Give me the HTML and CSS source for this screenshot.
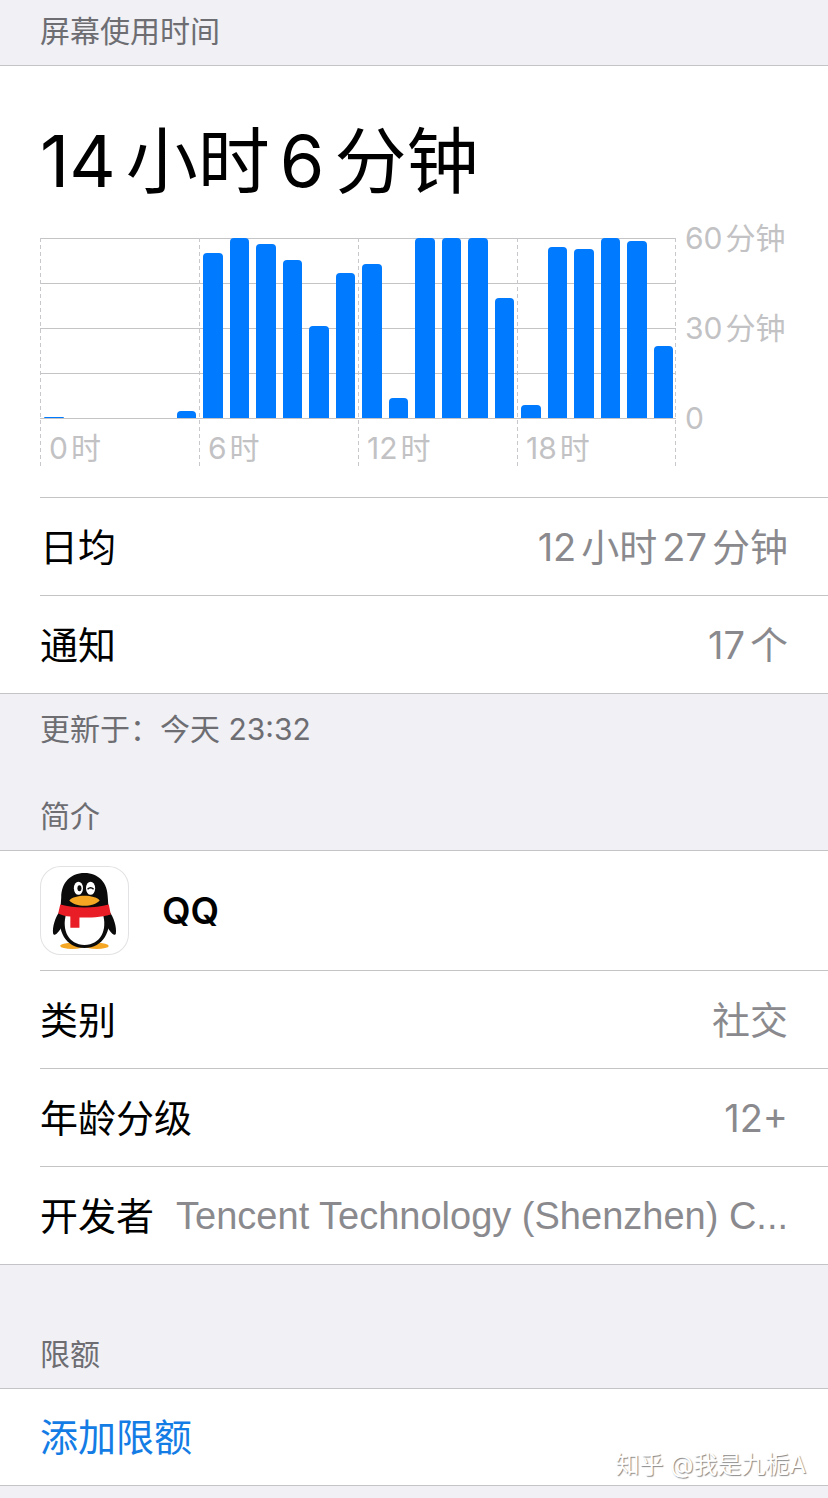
FILE: index.html
```
<!DOCTYPE html>
<html lang="zh-CN">
<head>
    <meta charset="UTF-8">
    <meta name="viewport" content="width=device-width, initial-scale=1.0">
    <title>QQ - 屏幕使用时间</title>
    <link rel="stylesheet" href="styles.css">
</head>
<body>

<main>
    <section>
        <h2 class="section-title">屏幕使用时间</h2>
        <div class="group">
            <div class="usage">
                <p class="total"><span class="num">14</span>小时<span class="num mid">6</span>分钟</p>
                <div class="chart">
                    <div class="plot">
                        <div class="lines">
                            <i></i><i></i><i></i><i></i>
                        </div>
                        <div class="hours">
                            <span><span class="num">0</span>时</span>
                            <span><span class="num">6</span>时</span>
                            <span><span class="num">12</span>时</span>
                            <span><span class="num">18</span>时</span>
                        </div>
                        <div class="bars" id="bars"></div>
                    </div>
                    <div class="scale">
                        <span><span class="num">60</span>分钟</span>
                        <span><span class="num">30</span>分钟</span>
                        <span>0</span>
                    </div>
                </div>
            </div>
            <dl class="rows">
                <div class="row">
                    <dt>日均</dt>
                    <dd><span class="num">12</span>小时<span class="num mid">27</span>分钟</dd>
                </div>
                <div class="row">
                    <dt>通知</dt>
                    <dd><span class="num">17</span>个</dd>
                </div>
            </dl>
        </div>
        <p class="note">更新于：今天 23:32</p>
    </section>

    <section class="about">
        <h2 class="section-title">简介</h2>
        <div class="group">
            <div class="app">
                <svg class="app-icon" viewBox="0 0 88 88" aria-hidden="true">
                    <rect x="0.5" y="0.5" width="87" height="87" rx="20" fill="#fff" stroke="#e2e2e4"/>
                    <ellipse cx="32" cy="79" rx="12" ry="3" fill="#f5a623"/>
                    <ellipse cx="56" cy="79" rx="12" ry="3" fill="#f5a623"/>
                    <path d="M20 44C15 51 12 60 13 67C14 70 18 66 21 61L67 61C70 66 74 70 75 67C76 60 73 51 68 44Z" fill="#0b0b0c"/>
                    <path d="M44 7C30 7 21 17 21 31L20 45C17 64 25 81 44 81C63 81 71 64 68 45L67 31C67 17 58 7 44 7Z" fill="#0b0b0c"/>
                    <path d="M26 47C21 63 28 78 44 78C60 78 67 63 62 47Z" fill="#fff"/>
                    <path d="M20 38C34 42 54 42 68 38L70 48C60 51 50 51 39 51L39 61L30 61L30 50C25 50 21 48 18 47Z" fill="#e91d25"/>
                    <ellipse cx="38" cy="22" rx="4.5" ry="6.5" fill="#fff"/>
                    <ellipse cx="50" cy="22" rx="4.5" ry="6.5" fill="#fff"/>
                    <ellipse cx="39" cy="22" rx="2" ry="3" fill="#0b0b0c"/>
                    <path d="M47 23Q50 20 53 23" fill="none" stroke="#0b0b0c" stroke-width="1.5"/>
                    <path d="M29 34C34 28 54 28 59 34C53 41 35 41 29 34Z" fill="#f5a623"/>
                </svg>
                <h3>QQ</h3>
            </div>
            <dl class="rows">
                <div class="row">
                    <dt>类别</dt>
                    <dd>社交</dd>
                </div>
                <div class="row">
                    <dt>年龄分级</dt>
                    <dd>12+</dd>
                </div>
                <div class="row">
                    <dt>开发者</dt>
                    <dd class="company">Tencent Technology (Shenzhen) C...</dd>
                </div>
            </dl>
        </div>
    </section>

    <section class="limits">
        <h2 class="section-title">限额</h2>
        <div class="group">
            <button class="add" type="button">添加限额</button>
            <span class="credit">知乎 @我是九栀A</span>
        </div>
    </section>
</main>

<script>
// minutes of use for each hour of the day
const minutes = [0.5, 0, 0, 0, 0, 2.4, 55, 60, 58, 52.7, 30.7, 48.4, 51.4, 6.7, 60, 60, 60, 40, 4.4, 57, 56.4, 60, 59, 24];

document.getElementById("bars").innerHTML = minutes.map(m => `
    <i style="height: ${m / 60 * 100}%"></i>
`).join('');
</script>

</body>
</html>
```
FILE: styles.css
```
* {
    box-sizing: border-box;
}
body {
    margin: 0;
    background-color: #f0f0f5;
    color: #000;
    font-family: Inter, 'Noto Sans CJK SC', sans-serif;
    font-size: 38px;
}
h2, h3, p, dl, dd {
    margin: 0;
    font-weight: normal;
}
.section-title, .note {
    padding: 10px 40px 13px;
    font-size: 30px;
    line-height: 42px;
    color: #6d6d72;
}
.note {
    padding: 14px 40px 0;
}
.about {
    margin-top: 35px;
}
.limits {
    margin-top: 58px;
}
.group {
    position: relative;
    background: #fff;
    border-top: 1px solid #c4c4c7;
    border-bottom: 1px solid #c4c4c7;
}
/* small gap between digits and Chinese characters */
.num {
    margin-right: 5px;
}
.mid {
    margin-left: 5px;
}
.usage {
    padding: 45px 40px 30px;
}
.total {
    font-size: 72px;
    line-height: 100px;
}
.total .num {
    margin-right: 10px;
}
.total .mid {
    margin-left: 10px;
}
.chart {
    display: grid;
    grid-template-columns: 1fr 112px;
    margin-top: 27px;
    font-size: 30px;
    color: #c2c2c4;
}
.chart .num {
    margin-right: 3px;
}
.plot {
    display: grid;
    grid-template-rows: 180px 49px;
}
.lines {
    grid-area: 1 / 1;
    display: grid;
    grid-template-rows: repeat(4, 1fr);
    border-bottom: 1px solid #c4c4c7;
    margin-bottom: -1px;
}
.lines i {
    border-top: 1px solid #c4c4c7;
}
.hours {
    grid-area: 1 / 1 / 3 / 2;
    display: grid;
    grid-template-columns: repeat(4, 1fr);
    line-height: 36px;
    background: repeating-linear-gradient(#c8c8cc 0 4px, transparent 4px 7px) right / 1px 100% no-repeat;
}
.hours > span {
    padding: 192px 0 0 9px;
    background: repeating-linear-gradient(#c8c8cc 0 4px, transparent 4px 7px) left / 1px 100% no-repeat;
}
.bars {
    grid-area: 1 / 1;
    display: grid;
    grid-template-columns: repeat(24, 1fr);
    align-items: end;
}
.bars i {
    margin: 0 3px 0 4px;
    background: #007aff;
    border-radius: 4px 4px 0 0;
}
.scale {
    display: flex;
    flex-direction: column;
    justify-content: space-between;
    height: 216px;
    margin-top: -18px;
    padding-left: 9px;
    line-height: 36px;
    white-space: nowrap;
}
.rows {
    padding-left: 40px;
}
.row {
    display: flex;
    justify-content: space-between;
    gap: 20px;
    padding-top: 2px;
    padding-right: 40px;
    border-top: 1px solid #c4c4c7;
    line-height: 95px;
    white-space: nowrap;
}
.row dd {
    overflow: hidden;
    text-overflow: ellipsis;
    color: #8a8a8e;
}
.row .company {
    font-family: 'Liberation Sans', Arial, sans-serif;
}
.app {
    display: flex;
    align-items: center;
    gap: 33px;
    padding: 15px 40px;
}
.app-icon {
    width: 89px;
    height: 89px;
}
.app h3 {
    font-size: 37px;
    font-weight: 600;
}
.add {
    display: block;
    width: 100%;
    padding: 0 40px;
    border: none;
    background: none;
    font: inherit;
    line-height: 96px;
    text-align: left;
    color: #147ce5;
    cursor: pointer;
}
.credit {
    position: absolute;
    right: 22px;
    bottom: 2px;
    font-size: 24px;
    line-height: 36px;
    color: #fff;
    text-shadow: 1px 1px 1px #888;
}
```
